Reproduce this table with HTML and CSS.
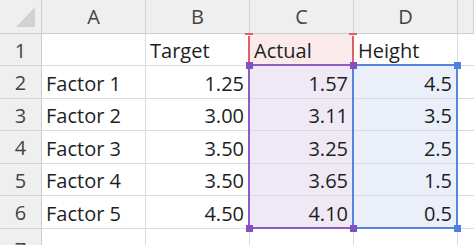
FILE: index.html
```html
<!DOCTYPE html>
<html>
<head>
<meta charset="utf-8">
<link rel="stylesheet" href="styles.css">
</head>
<body>
<div class="sheet">
  <div class="grid">
    <div class="corner"><span class="tri"></span></div>
    <div class="colhead">A</div>
    <div class="colhead">B</div>
    <div class="colhead">C</div>
    <div class="colhead">D</div>
    <div class="colhead last"></div>

    <div class="rowhead">1</div>
    <div class="cell"></div>
    <div class="cell">Target</div>
    <div class="cell name">Actual</div>
    <div class="cell">Height</div>
    <div class="cell last"></div>

    <div class="rowhead">2</div>
    <div class="cell">Factor 1</div>
    <div class="cell num">1.25</div>
    <div class="cell num val">1.57</div>
    <div class="cell num size">4.5</div>
    <div class="cell last"></div>

    <div class="rowhead">3</div>
    <div class="cell">Factor 2</div>
    <div class="cell num">3.00</div>
    <div class="cell num val">3.11</div>
    <div class="cell num size">3.5</div>
    <div class="cell last"></div>

    <div class="rowhead">4</div>
    <div class="cell">Factor 3</div>
    <div class="cell num">3.50</div>
    <div class="cell num val">3.25</div>
    <div class="cell num size">2.5</div>
    <div class="cell last"></div>

    <div class="rowhead">5</div>
    <div class="cell">Factor 4</div>
    <div class="cell num">3.50</div>
    <div class="cell num val">3.65</div>
    <div class="cell num size">1.5</div>
    <div class="cell last"></div>

    <div class="rowhead">6</div>
    <div class="cell">Factor 5</div>
    <div class="cell num">4.50</div>
    <div class="cell num val">4.10</div>
    <div class="cell num size">0.5</div>
    <div class="cell last"></div>

    <div class="rowhead">7</div>
    <div class="cell"></div>
    <div class="cell"></div>
    <div class="cell"></div>
    <div class="cell"></div>
    <div class="cell last"></div>
  </div>

  <div class="red-line red-left"></div>
  <div class="red-line red-right"></div>
  <div class="red-tick tick-left"></div>
  <div class="red-tick tick-right"></div>

  <div class="range purple"></div>
  <div class="range blue"></div>

  <div class="handle ph h1"></div>
  <div class="handle ph h2"></div>
  <div class="handle ph h3"></div>
  <div class="handle ph h4"></div>
  <div class="handle bh h5"></div>
  <div class="handle bh h6"></div>
</div>
</body>
</html>
```

FILE: styles.css
```css
html, body {
  margin: 0;
  padding: 0;
  background: #ffffff;
}

.sheet {
  position: relative;
  width: 474px;
  height: 245px;
  overflow: hidden;
  font-family: "Open Sans", "Liberation Sans", sans-serif;
  font-size: 20px;
  line-height: 24px;
  color: #1e1e1e;
}

.grid {
  display: grid;
  grid-template-columns: 42px 104px 104px 104px 104px 1fr;
  grid-template-rows: 34px 32px 33px 32px 33px 32px 33px 40px;
}

.corner {
  position: relative;
  background: #efefef;
  border-right: 1px solid #cdcdcd;
  border-bottom: 1px solid #cdcdcd;
}

.tri {
  position: absolute;
  right: 6px;
  bottom: 6px;
  width: 0;
  height: 0;
  border-left: 19px solid transparent;
  border-bottom: 20px solid #d2d2d2;
}

.colhead {
  display: flex;
  align-items: center;
  justify-content: center;
  background: #efefef;
  color: #444444;
  border-right: 1px solid #d2d2d2;
  border-bottom: 1px solid #cdcdcd;
  padding-top: 1px;
}

.rowhead {
  display: flex;
  align-items: center;
  justify-content: center;
  background: #efefef;
  color: #444444;
  border-right: 1px solid #cdcdcd;
  border-bottom: 1px solid #d6d6d6;
  padding-top: 2px;
}

.cell {
  display: flex;
  align-items: center;
  padding: 3px 4px 0 4px;
  border-right: 1px solid #dadada;
  border-bottom: 1px solid #dadada;
  white-space: nowrap;
  overflow: hidden;
}

.cell.last {
  border-right: none;
}

.num {
  justify-content: flex-end;
  padding-right: 5px;
}

.name {
  background: #fbeaec;
}

.val {
  background: #eee9f5;
}

.size {
  background: #eaeff9;
}

/* range highlight overlays */
.red-line {
  position: absolute;
  top: 36px;
  width: 2px;
  height: 28px;
  background: #e0606a;
}

.red-left { left: 248px; }
.red-right { left: 352px; }

.red-tick {
  position: absolute;
  top: 33px;
  width: 8px;
  height: 2px;
  background: #e0606a;
}

.tick-left { left: 245px; }
.tick-right { left: 349px; }

.range {
  position: absolute;
  top: 64px;
  height: 165px;
  box-sizing: border-box;
  border: 2px solid;
}

.purple {
  left: 248px;
  width: 106px;
  border-color: #8d5ac6;
}

.blue {
  left: 352px;
  width: 106px;
  border-color: #5585e0;
}

.handle {
  position: absolute;
  width: 7px;
  height: 7px;
}

.ph { background: #8450c0; }
.bh { background: #4f80e0; }

.h1 { left: 246px; top: 62px; }
.h2 { left: 350px; top: 62px; }
.h3 { left: 246px; top: 225px; }
.h4 { left: 350px; top: 225px; }
.h5 { left: 454px; top: 62px; }
.h6 { left: 454px; top: 225px; }
```
